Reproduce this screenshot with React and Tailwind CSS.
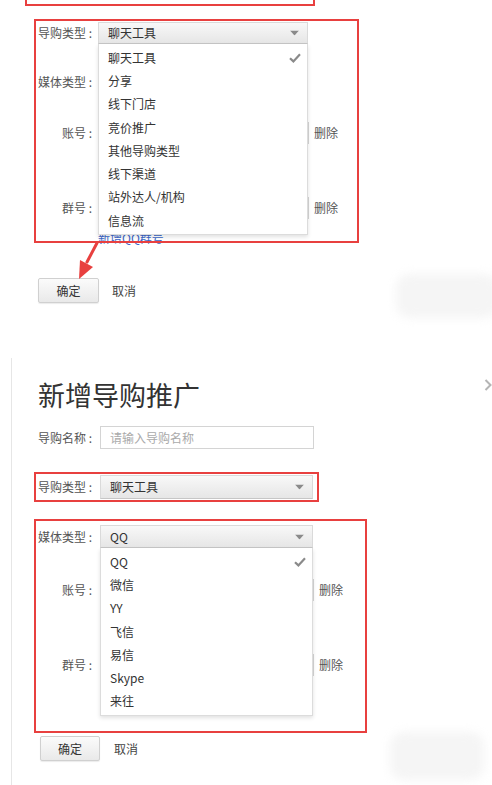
import React from "react";

const Caret = () => (
  <svg width="9" height="5" viewBox="0 0 9 5" className="absolute right-[8px] top-1/2 -translate-y-1/2">
    <path d="M0 0 H9 L4.5 5 Z" fill="#8a8a8a" />
  </svg>
);

const Check = () => (
  <svg width="12" height="10" viewBox="0 0 12 10" className="absolute right-[6px] top-1/2 -translate-y-1/2">
    <path d="M1 5.2 L4.4 8.4 L11 1.2" fill="none" stroke="#8a8a8a" strokeWidth="2.2" />
  </svg>
);

function Select({ value, className, options }) {
  return (
    <div className={"relative shrink-0 " + className}>
      <div className="relative flex h-full items-center border border-[#dadada] border-b-[#c6c6c6] bg-linear-to-b from-[#f8f8f8] to-[#e6e6e6] pl-[9px] text-[#333]">
        {value}
        <Caret />
      </div>
      {options && (
        <ul className="absolute left-0 top-full z-10 w-full border border-t-0 border-[#dcdcdc] bg-white py-[2px] shadow-[0_2px_4px_rgba(0,0,0,0.12)]">
          {options.map((o, i) => (
            <li key={o} className="relative flex h-[23.3px] items-center pl-[9px] text-[#333]">
              {o}
              {i === 0 && <Check />}
            </li>
          ))}
        </ul>
      )}
    </div>
  );
}

const Label = ({ children, className = "" }) => (
  <span className={"shrink-0 whitespace-pre pr-[6px] text-right text-[#555] " + className}>{children} :</span>
);

const Field = ({ className }) => (
  <div className={"shrink-0 border border-[#d6d6d6] bg-white " + className} />
);

const Redbox = () => (
  <div className="pointer-events-none absolute inset-0 z-20 border-2 border-[#e8403f]" />
);

const Button = ({ children, className = "" }) => (
  <button className={"flex items-center justify-center rounded-[2px] border border-[#d0d0d0] bg-linear-to-b from-[#fbfbfb] to-[#e9e9e9] text-[#333] shadow-[0_1px_1px_rgba(0,0,0,0.08)] " + className}>
    {children}
  </button>
);

const Smudge = ({ className }) => (
  <div className={"absolute rounded-[14px] bg-[#f5f5f5] blur-[5px] " + className} />
);

const GUIDE_TYPES = ["聊天工具", "分享", "线下门店", "竞价推广", "其他导购类型", "线下渠道", "站外达人/机构", "信息流"];
const MEDIA_TYPES = ["QQ", "微信", "YY", "飞信", "易信", "Skype", "来往"];

export default function App() {
  return (
    <div className="relative h-[785px] w-[492px] overflow-hidden bg-white font-['Noto_Sans_CJK_SC','Liberation_Sans',sans-serif] text-[12px] leading-[14px] text-[#333]">
      {/* first form: guide type dropdown open */}
      <section className="relative h-[358px]">
        <div className="ml-[25px] h-[6px] w-[290px] border-x-2 border-b-2 border-[#e8403f]" />

        <div className="relative ml-[34px] mt-[13px] h-[224px] w-[325px] pl-[2px] pt-[3px]">
          <div className="flex h-[22px] items-center">
            <Label className="w-[62px]">导购类型</Label>
            <Select value="聊天工具" className="z-10 h-[22px] w-[210px]" options={GUIDE_TYPES} />
          </div>
          <div className="mt-[27px] flex h-[22px] items-center">
            <Label className="w-[62px]">媒体类型</Label>
            <Select className="h-[22px] w-[210px]" />
          </div>
          <div className="mt-[29px] flex h-[22px] items-center">
            <Label className="w-[62px]">账号</Label>
            <Field className="h-[22px] w-[211px]" />
            <span className="ml-[5px] text-[#555]">删除</span>
          </div>
          <div className="mt-[53px] flex h-[22px] items-center">
            <Label className="w-[62px]">群号</Label>
            <Field className="h-[22px] w-[211px]" />
            <span className="ml-[5px] text-[#555]">删除</span>
          </div>
          <div className="mt-[12px] pl-[62px] text-[#3a66c8]">新增QQ群号</div>
          <Redbox />
        </div>

        <svg width="32" height="42" viewBox="70 240 32 42" className="absolute left-[70px] top-[240px] z-30">
          <path d="M97 243 L87 262" stroke="#e8403f" strokeWidth="3" strokeLinecap="round" />
          <path d="M79 279 L80 260 L93 267 Z" fill="#e8403f" />
        </svg>

        <div className="ml-[38px] mt-[35px] flex items-center">
          <Button className="h-[25px] w-[61px]">确定</Button>
          <span className="ml-[13px] text-[#444]">取消</span>
        </div>

        <Smudge className="right-[-6px] top-[274px] h-[44px] w-[102px]" />
      </section>

      {/* second form: media type dropdown open */}
      <section className="relative ml-[11px] h-[427px] border-l border-[#e6e6e6] pl-[22px]">
        <h1 className="ml-[4px] pt-[23px] text-[27px] font-normal leading-[28px] text-[#333]">新增导购推广</h1>

        <div className="mt-[17px] flex h-[23px] items-center">
          <Label className="w-[64px]">导购名称</Label>
          <div className="ml-[2px] flex h-[23px] w-[214px] items-center border border-[#d4d4d4] pl-[9px] text-[#aaa]">请输入导购名称</div>
        </div>

        <div className="relative mt-[23px] flex h-[30px] w-[285px] items-center">
          <Label className="w-[64px]">导购类型</Label>
          <Select value="聊天工具" className="ml-[2px] h-[24px] w-[213px]" />
          <Redbox />
        </div>

        <div className="relative mt-[17px] h-[214px] w-[333px] pt-[6px]">
          <div className="flex h-[23px] items-center">
            <Label className="w-[64px]">媒体类型</Label>
            <Select value="QQ" className="z-10 ml-[2px] h-[23px] w-[213px]" options={MEDIA_TYPES} />
          </div>
          <div className="mt-[31px] flex h-[22px] items-center">
            <Label className="w-[64px]">账号</Label>
            <Field className="ml-[2px] h-[22px] w-[214px]" />
            <span className="ml-[5px] text-[#555]">删除</span>
          </div>
          <div className="mt-[53px] flex h-[22px] items-center">
            <Label className="w-[64px]">群号</Label>
            <Field className="ml-[2px] h-[22px] w-[214px]" />
            <span className="ml-[5px] text-[#555]">删除</span>
          </div>
          <Redbox />
        </div>

        <div className="ml-[6px] mt-[3px] flex items-center">
          <Button className="h-[25px] w-[60px]">确定</Button>
          <span className="ml-[14px] text-[#444]">取消</span>
        </div>

        <Smudge className="left-[378px] top-[374px] h-[48px] w-[94px]" />
      </section>

      <svg width="8" height="12" viewBox="0 0 8 12" className="absolute left-[484px] top-[379px]">
        <path d="M1.5 1 L6.5 6 L1.5 11" fill="none" stroke="#b5b5b5" strokeWidth="2" />
      </svg>
    </div>
  );
}
